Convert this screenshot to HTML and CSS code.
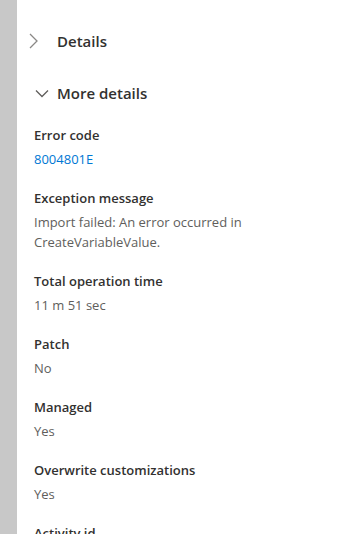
FILE: index.html
```html
<!DOCTYPE html>
<html lang="en-US">
<head>
    <meta charset="UTF-8">
    <meta name="viewport" content="width=device-width, initial-scale=1.0">
    <title>Details</title>
    <link rel="stylesheet" href="styles.css">
</head>
<body>
    <div class="page">
        <div class="rail"></div>
        <div class="panel">
            <div class="section-header collapsed">
                <svg class="chevron" width="10" height="16" viewBox="0 0 10 16">
                    <path d="M2 1 L9 8 L2 15" fill="none" stroke="#8a8886" stroke-width="1.3"/>
                </svg>
                <span class="section-title">Details</span>
            </div>

            <div class="section-header expanded">
                <svg class="chevron" width="14" height="9" viewBox="0 0 14 9">
                    <path d="M1 1.5 L7 7.5 L13 1.5" fill="none" stroke="#605e5c" stroke-width="1.3"/>
                </svg>
                <span class="section-title">More details</span>
            </div>

            <div class="field">
                <label>Error code</label>
                <a class="value link" href="#">8004801E</a>
            </div>
            <div class="field">
                <label>Exception message</label>
                <span class="value">Import failed: An error occurred in CreateVariableValue.</span>
            </div>
            <div class="field">
                <label>Total operation time</label>
                <span class="value">11 m 51 sec</span>
            </div>
            <div class="field">
                <label>Patch</label>
                <span class="value">No</span>
            </div>
            <div class="field">
                <label>Managed</label>
                <span class="value">Yes</span>
            </div>
            <div class="field">
                <label>Overwrite customizations</label>
                <span class="value">Yes</span>
            </div>
            <div class="field">
                <label>Activity id</label>
            </div>
        </div>
    </div>
</body>
</html>
```

FILE: styles.css
```css
:root {
    --primary-font: "Segoe UI", "Open Sans", sans-serif;
    --text-color: #323130;
    --secondary-color: #605e5c;
    --link-color: #0078d4;
}

* {
    margin: 0;
    padding: 0;
    box-sizing: border-box;
}

body {
    font-family: var(--primary-font);
    color: var(--text-color);
    background-color: white;
    overflow: hidden;
}

.page {
    display: flex;
    height: 534px;
    overflow: hidden;
}

.rail {
    width: 17px;
    flex-shrink: 0;
    background-color: #c8c8c8;
}

.panel {
    flex: 1;
    padding-top: 29px;
}

.section-header {
    display: flex;
    align-items: center;
    height: 24px;
    margin-bottom: 28px;
}

.section-header.collapsed .chevron {
    margin-left: 11px;
    margin-right: 19px;
}

.section-header.expanded .chevron {
    margin-left: 18px;
    margin-right: 8px;
}

.section-title {
    font-size: 15px;
    font-weight: 600;
    color: var(--text-color);
}

.section-header.expanded {
    margin-bottom: 20px;
}

.field {
    display: flex;
    flex-direction: column;
    padding-left: 17px;
    padding-right: 20px;
    margin-bottom: 19px;
}

.field label {
    font-size: 13px;
    font-weight: 600;
    line-height: 20px;
    margin-bottom: 4px;
}

.value {
    font-size: 13px;
    line-height: 20px;
    color: var(--secondary-color);
}

.value.link {
    color: var(--link-color);
    text-decoration: none;
}
```
